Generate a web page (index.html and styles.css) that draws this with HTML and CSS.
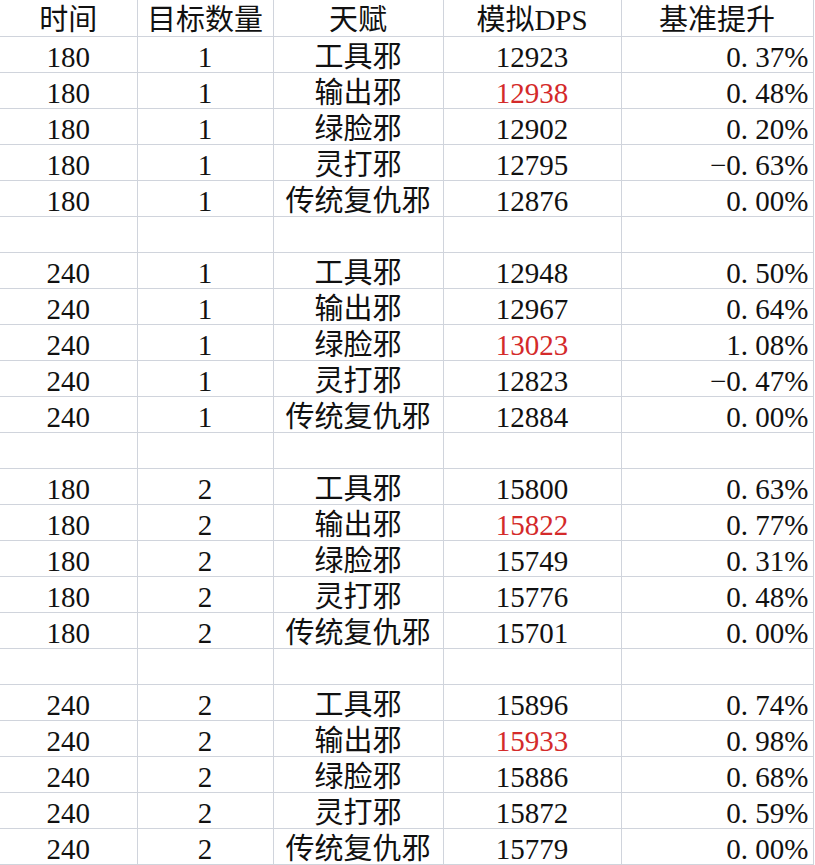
FILE: index.html
```html
<!DOCTYPE html>
<html>
<head>
<meta charset="utf-8">
<title>模拟DPS</title>
<link rel="stylesheet" href="styles.css">
</head>
<body>
<table class="sheet">
  <colgroup>
    <col class="c1"><col class="c2"><col class="c3"><col class="c4"><col class="c5">
  </colgroup>
  <thead>
    <tr><th>时间</th><th>目标数量</th><th>天赋</th><th>模拟DPS</th><th>基准提升</th></tr>
  </thead>
  <tbody>
    <tr><td>180</td><td>1</td><td>工具邪</td><td>12923</td><td class="pct">0<span class="dot">.</span>37%</td></tr>
    <tr><td>180</td><td>1</td><td>输出邪</td><td class="best">12938</td><td class="pct">0<span class="dot">.</span>48%</td></tr>
    <tr><td>180</td><td>1</td><td>绿脸邪</td><td>12902</td><td class="pct">0<span class="dot">.</span>20%</td></tr>
    <tr><td>180</td><td>1</td><td>灵打邪</td><td>12795</td><td class="pct">−0<span class="dot">.</span>63%</td></tr>
    <tr><td>180</td><td>1</td><td>传统复仇邪</td><td>12876</td><td class="pct">0<span class="dot">.</span>00%</td></tr>
    <tr class="blank"><td></td><td></td><td></td><td></td><td></td></tr>
    <tr><td>240</td><td>1</td><td>工具邪</td><td>12948</td><td class="pct">0<span class="dot">.</span>50%</td></tr>
    <tr><td>240</td><td>1</td><td>输出邪</td><td>12967</td><td class="pct">0<span class="dot">.</span>64%</td></tr>
    <tr><td>240</td><td>1</td><td>绿脸邪</td><td class="best">13023</td><td class="pct">1<span class="dot">.</span>08%</td></tr>
    <tr><td>240</td><td>1</td><td>灵打邪</td><td>12823</td><td class="pct">−0<span class="dot">.</span>47%</td></tr>
    <tr><td>240</td><td>1</td><td>传统复仇邪</td><td>12884</td><td class="pct">0<span class="dot">.</span>00%</td></tr>
    <tr class="blank"><td></td><td></td><td></td><td></td><td></td></tr>
    <tr><td>180</td><td>2</td><td>工具邪</td><td>15800</td><td class="pct">0<span class="dot">.</span>63%</td></tr>
    <tr><td>180</td><td>2</td><td>输出邪</td><td class="best">15822</td><td class="pct">0<span class="dot">.</span>77%</td></tr>
    <tr><td>180</td><td>2</td><td>绿脸邪</td><td>15749</td><td class="pct">0<span class="dot">.</span>31%</td></tr>
    <tr><td>180</td><td>2</td><td>灵打邪</td><td>15776</td><td class="pct">0<span class="dot">.</span>48%</td></tr>
    <tr><td>180</td><td>2</td><td>传统复仇邪</td><td>15701</td><td class="pct">0<span class="dot">.</span>00%</td></tr>
    <tr class="blank"><td></td><td></td><td></td><td></td><td></td></tr>
    <tr><td>240</td><td>2</td><td>工具邪</td><td>15896</td><td class="pct">0<span class="dot">.</span>74%</td></tr>
    <tr><td>240</td><td>2</td><td>输出邪</td><td class="best">15933</td><td class="pct">0<span class="dot">.</span>98%</td></tr>
    <tr><td>240</td><td>2</td><td>绿脸邪</td><td>15886</td><td class="pct">0<span class="dot">.</span>68%</td></tr>
    <tr><td>240</td><td>2</td><td>灵打邪</td><td>15872</td><td class="pct">0<span class="dot">.</span>59%</td></tr>
    <tr><td>240</td><td>2</td><td>传统复仇邪</td><td>15779</td><td class="pct">0<span class="dot">.</span>00%</td></tr>
  </tbody>
</table>
</body>
</html>
```
FILE: styles.css
```css
html, body {
  margin: 0;
  padding: 0;
  background: #ffffff;
}

.sheet {
  border-collapse: collapse;
  table-layout: fixed;
  width: 813px;
  font-family: "Liberation Serif", "Times New Roman", "Noto Sans CJK SC", serif;
  font-size: 29px;
  color: #111111;
}

.c1 { width: 137px; }
.c2 { width: 136px; }
.c3 { width: 170px; }
.c4 { width: 178px; }
.c5 { width: 192px; }

.sheet th,
.sheet td {
  height: 36px;
  padding: 5px 0 0 0;
  box-sizing: border-box;
  line-height: 30px;
  font-weight: normal;
  text-align: center;
  white-space: nowrap;
  overflow: hidden;
  border-right: 1px solid #d0d4dc;
  border-bottom: 1px solid #d0d4dc;
  vertical-align: top;
}

.sheet td.pct {
  text-align: right;
  padding-right: 4px;
}

.dot {
  display: inline-block;
  width: 0.5em;
  text-align: left;
}

.sheet td.best {
  color: #d42a2a;
}
```
